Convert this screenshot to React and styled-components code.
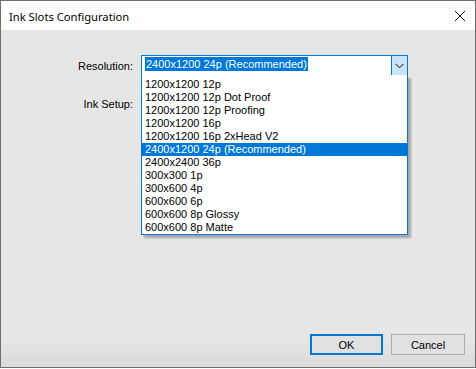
import React from 'react';
import styled, { createGlobalStyle } from 'styled-components';

const resolutions = [
  '1200x1200 12p',
  '1200x1200 12p Dot Proof',
  '1200x1200 12p Proofing',
  '1200x1200 16p',
  '1200x1200 16p 2xHead V2',
  '2400x1200 24p (Recommended)',
  '2400x2400 36p',
  '300x300 1p',
  '300x600 4p',
  '600x600 6p',
  '600x600 8p Glossy',
  '600x600 8p Matte',
];

const selected = '2400x1200 24p (Recommended)';

export default function App() {
  return (
    <>
      <GlobalStyle />
      <Window>
        <TitleBar>
          <Title>Ink Slots Configuration</Title>
          <CloseButton aria-label="Close">
            <svg width="12" height="12" viewBox="0 0 12 12">
              <path d="M1 1 L11 11 M11 1 L1 11" stroke="#111" strokeWidth="1" fill="none" />
            </svg>
          </CloseButton>
        </TitleBar>
        <Body>
          <Form>
            <Label>Resolution:</Label>
            <Combo>
              <ComboValue>
                <Highlight>{selected}</Highlight>
              </ComboValue>
              <DropButton>
                <svg width="9" height="6" viewBox="0 0 9 6">
                  <path d="M0.5 0.8 L4.5 4.6 L8.5 0.8" stroke="#444" strokeWidth="1.1" fill="none" />
                </svg>
              </DropButton>
              <List>
                {resolutions.map((r) => (
                  <Item key={r} $active={r === selected}>{r}</Item>
                ))}
              </List>
            </Combo>
            <Label>Ink Setup:</Label>
            <div />
          </Form>
          <Buttons>
            <Button $primary>OK</Button>
            <Button>Cancel</Button>
          </Buttons>
        </Body>
      </Window>
    </>
  );
}

const GlobalStyle = createGlobalStyle`
  * { box-sizing: border-box; }
  body {
    margin: 0;
    background: #ffffff;
    font-family: "Liberation Sans", Arial, sans-serif;
    font-size: 11px;
    color: #000;
  }
`;

const Window = styled.div`
  width: 476px;
  height: 368px;
  border: 1px solid #6e6e6e;
  display: flex;
  flex-direction: column;
  background: #fff;
`;

const TitleBar = styled.div`
  height: 29px;
  flex-shrink: 0;
  display: flex;
  align-items: center;
  justify-content: space-between;
  padding-left: 8px;
  background: #fff;
`;

const Title = styled.span`
  font-family: "Noto Sans", "Open Sans", sans-serif;
  font-size: 11.2px;
  color: #000;
  padding-top: 1px;
`;

const CloseButton = styled.div`
  width: 30px;
  height: 29px;
  display: flex;
  align-items: center;
  justify-content: center;
  padding-top: 1px;
`;

const Body = styled.div`
  flex: 1;
  display: flex;
  flex-direction: column;
  background: linear-gradient(to bottom, #e6e6e6 0, #e6e6e6 calc(100% - 28px), #dadada 100%);
`;

const Form = styled.div`
  display: grid;
  grid-template-columns: 132px 267px;
  grid-auto-rows: 21px;
  column-gap: 8px;
  row-gap: 17px;
  padding-top: 25px;
`;

const Label = styled.div`
  text-align: right;
  line-height: 21px;
  padding-top: 1px;
  color: #000;
`;

const Combo = styled.div`
  position: relative;
  display: flex;
  height: 21px;
  border: 1px solid #0078d7;
  background: #fff;
  z-index: 2;
`;

const ComboValue = styled.div`
  flex: 1;
  display: flex;
  align-items: flex-start;
  padding: 1px 0 0 3px;
`;

const Highlight = styled.span`
  background: #0078d7;
  color: #fff;
  height: 14px;
  line-height: 14px;
  padding: 0 1px;
`;

const DropButton = styled.div`
  width: 16px;
  display: flex;
  align-items: center;
  justify-content: center;
  background: #cce4f7;
  border-left: 1px solid #0078d7;
  padding-top: 1px;
`;

const List = styled.div`
  position: absolute;
  top: 19px;
  left: -1px;
  width: 267px;
  height: 160px;
  border: 1px solid #0078d7;
  border-top: none;
  background: #fff;
  box-shadow: 3px 3px 2px rgba(0, 0, 0, 0.28);
  padding-top: 3px;
`;

const Item = styled.div`
  height: 13px;
  line-height: 13px;
  padding-left: 3px;
  white-space: nowrap;
  background: ${(p) => (p.$active ? '#0078d7' : 'transparent')};
  color: ${(p) => (p.$active ? '#fff' : '#000')};
`;

const Buttons = styled.div`
  margin-top: auto;
  display: flex;
  justify-content: flex-end;
  gap: 8px;
  padding: 0 10px 12px 0;
`;

const Button = styled.div`
  width: ${(p) => (p.$primary ? '73px' : '74px')};
  height: 21px;
  display: flex;
  align-items: center;
  justify-content: center;
  background: #e1e1e1;
  border: ${(p) => (p.$primary ? '2px solid #0078d7' : '1px solid #adadad')};
  color: #000;
`;
